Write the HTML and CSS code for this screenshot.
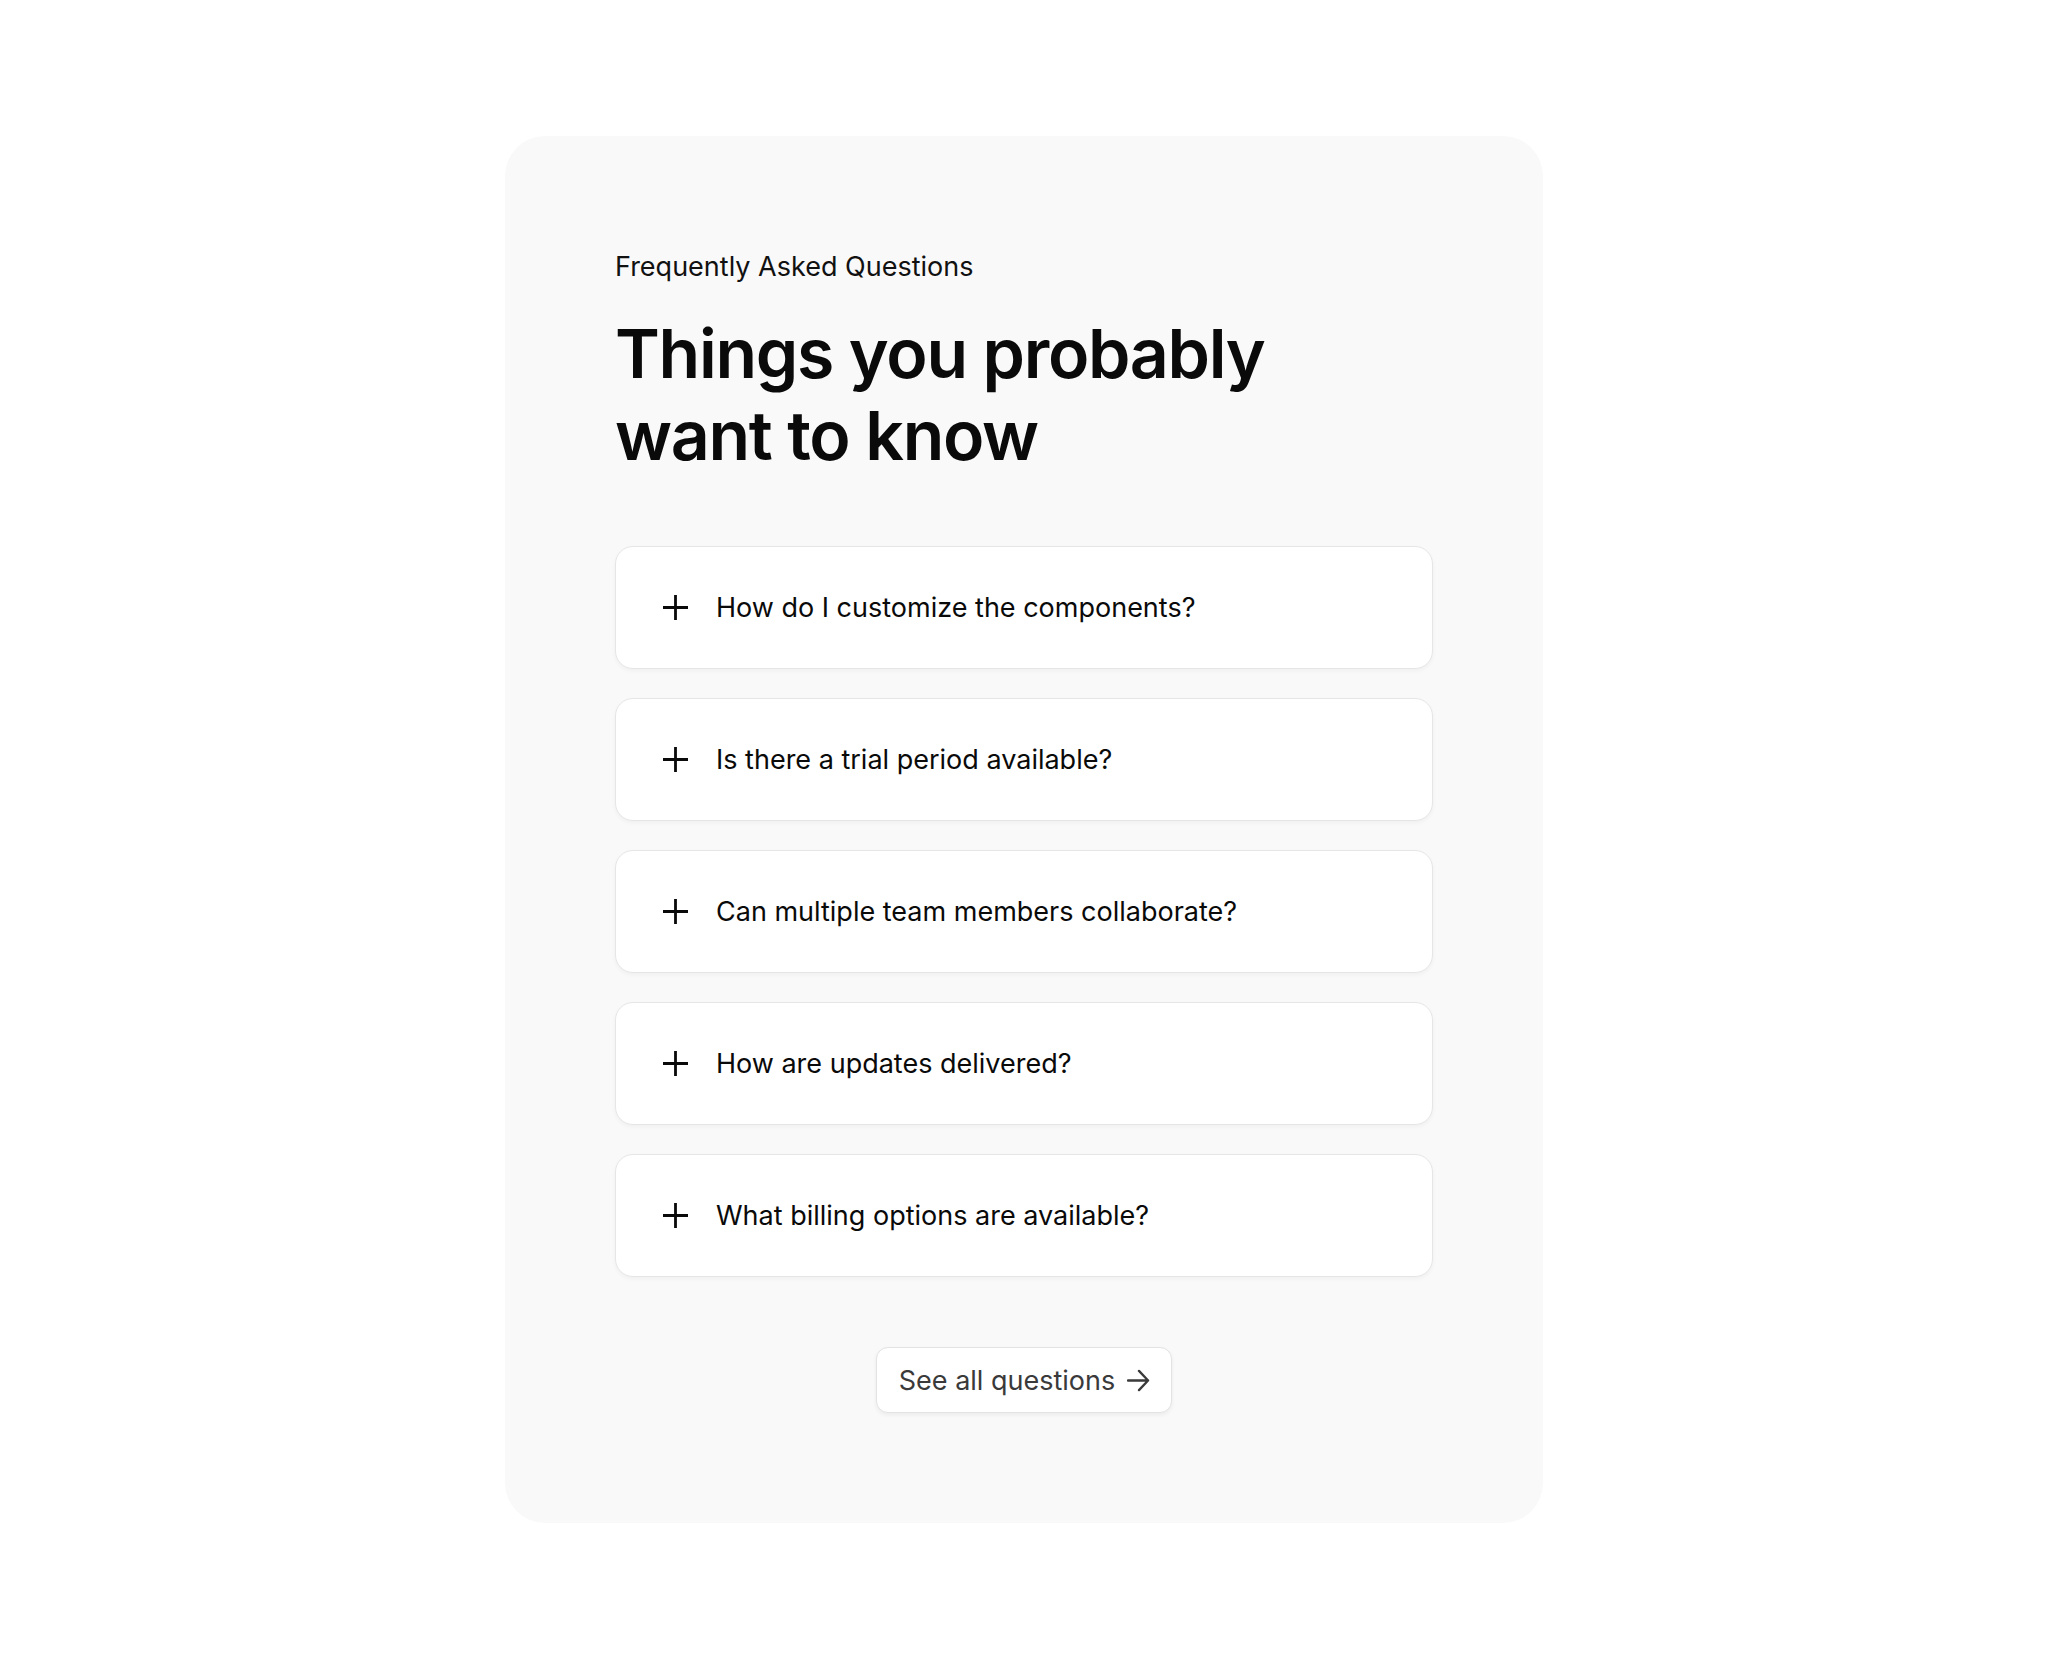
FILE: index.html
```html
<!DOCTYPE html>
<html lang="en">
<head>
<meta charset="utf-8">
<title>FAQ</title>
<link rel="stylesheet" href="styles.css">
</head>
<body>
<main class="page">
  <section class="faq-card">
    <p class="eyebrow">Frequently Asked Questions</p>
    <h1 class="title">Things you probably<br>want to know</h1>
    <ul class="faq-list">
      <li class="faq-item">
        <svg class="plus" viewBox="0 0 24 24" aria-hidden="true"><path d="M0 12h24M12 0v24"/></svg>
        <span class="question">How do I customize the components?</span>
      </li>
      <li class="faq-item">
        <svg class="plus" viewBox="0 0 24 24" aria-hidden="true"><path d="M0 12h24M12 0v24"/></svg>
        <span class="question">Is there a trial period available?</span>
      </li>
      <li class="faq-item">
        <svg class="plus" viewBox="0 0 24 24" aria-hidden="true"><path d="M0 12h24M12 0v24"/></svg>
        <span class="question">Can multiple team members collaborate?</span>
      </li>
      <li class="faq-item">
        <svg class="plus" viewBox="0 0 24 24" aria-hidden="true"><path d="M0 12h24M12 0v24"/></svg>
        <span class="question">How are updates delivered?</span>
      </li>
      <li class="faq-item">
        <svg class="plus" viewBox="0 0 24 24" aria-hidden="true"><path d="M0 12h24M12 0v24"/></svg>
        <span class="question">What billing options are available?</span>
      </li>
    </ul>
    <div class="actions">
      <a class="see-all" href="#">See all questions
        <svg class="arrow" viewBox="0 0 24 24" aria-hidden="true"><path d="M1 12h21M12.5 2L22 12l-9.5 10"/></svg>
      </a>
    </div>
  </section>
</main>
</body>
</html>
```

FILE: styles.css
```css
* { box-sizing: border-box; }

html, body {
  margin: 0;
  padding: 0;
  background: #ffffff;
}

body {
  font-family: Inter, "Noto Sans", "Liberation Sans", sans-serif;
  color: #0a0a0a;
}

.page {
  display: flex;
  justify-content: center;
  padding-top: 136px;
  padding-bottom: 134px;
}

.faq-card {
  width: 1038px;
  background: #f9f9f9;
  border-radius: 40px;
  padding: 111px 110px 110px 110px;
  display: flex;
  flex-direction: column;
}

.eyebrow {
  margin: 0;
  font-size: 27px;
  line-height: 39px;
  font-weight: 400;
  color: #111111;
}

.title {
  margin: 26px 0 0 0;
  font-size: 68px;
  line-height: 82px;
  font-weight: 600;
  letter-spacing: -1.3px;
  color: #0a0a0a;
}

.faq-list {
  list-style: none;
  margin: 70px 0 0 0;
  padding: 0;
  display: flex;
  flex-direction: column;
  gap: 29px;
}

.faq-item {
  height: 123px;
  display: flex;
  align-items: center;
  gap: 28px;
  padding: 0 46px 0 47px;
  background: #ffffff;
  border: 1.5px solid #e6e6e6;
  border-radius: 18px;
  box-shadow: 0 2px 4px rgba(0, 0, 0, 0.04);
}

.plus {
  width: 25px;
  height: 25px;
  flex: none;
  stroke: #0a0a0a;
  stroke-width: 2.7;
  fill: none;
}

.question {
  font-size: 27px;
  line-height: 39px;
  font-weight: 400;
  color: #0a0a0a;
}

.actions {
  margin-top: 70px;
  display: flex;
  justify-content: center;
}

.see-all {
  display: inline-flex;
  align-items: center;
  gap: 12px;
  height: 66px;
  padding: 0 21px 0 22px;
  background: #ffffff;
  border: 1.5px solid #e3e3e3;
  border-radius: 12px;
  box-shadow: 0 2px 4px rgba(0, 0, 0, 0.06);
  font-size: 27px;
  color: #3a3a3a;
  text-decoration: none;
}

.arrow {
  width: 23px;
  height: 23px;
  flex: none;
  stroke: #3a3a3a;
  stroke-width: 2.4;
  fill: none;
  stroke-linecap: round;
  stroke-linejoin: round;
}
```
